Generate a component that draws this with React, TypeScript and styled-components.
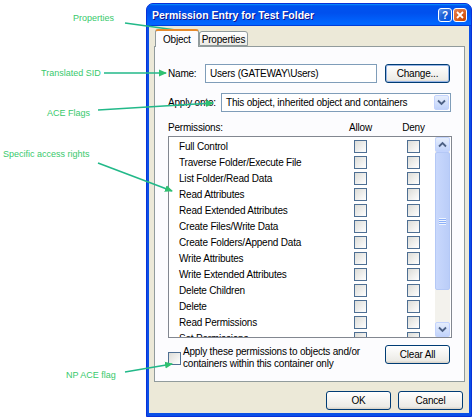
import React from "react"
import styled, { createGlobalStyle } from "styled-components"

const GlobalStyle = createGlobalStyle`
	html, body {
		margin: 0;
		padding: 0;
		background: #ffffff;
	}
	body {
		width: 474px;
		height: 420px;
		overflow: hidden;
		font-family: "Liberation Sans", Arial, sans-serif;
	}
`

const permissions = [
	"Full Control",
	"Traverse Folder/Execute File",
	"List Folder/Read Data",
	"Read Attributes",
	"Read Extended Attributes",
	"Create Files/Write Data",
	"Create Folders/Append Data",
	"Write Attributes",
	"Write Extended Attributes",
	"Delete Children",
	"Delete",
	"Read Permissions",
	"Set Permissions"
]

const notes = [
	{ text: "Properties", x: 73, y: 12 },
	{ text: "Translated SID", x: 41, y: 67 },
	{ text: "ACE Flags", x: 47, y: 107 },
	{ text: "Specific access rights", x: 3, y: 148 },
	{ text: "NP ACE flag", x: 66, y: 369 }
]

const arrows = [
	[125, 23, 212, 35],
	[104, 73, 166, 73],
	[98, 110, 213, 103],
	[98, 163, 172, 191],
	[125, 372, 172, 364]
]

const Chevron = ({ up }: { up?: boolean }) => (
	<svg width="9" height="7" viewBox="0 0 9 7">
		<path d={up ? "M1 5.5 L4.5 2 L8 5.5" : "M1 1.5 L4.5 5 L8 1.5"} fill="none" stroke="#4d6185" strokeWidth="1.8" />
	</svg>
)

const App = () => {
	return (
		<Page>
			<GlobalStyle />
			<Window>
				<TitleBar>
					<Title>Permission Entry for Test Folder</Title>
					<TitleButton>?</TitleButton>
					<TitleButton $close>
						<svg width="8" height="8" viewBox="0 0 8 8">
							<path d="M1 1 L7 7 M7 1 L1 7" stroke="#fff" strokeWidth="1.8" />
						</svg>
					</TitleButton>
				</TitleBar>
				<Body>
					<TabStrip>
						<Tab $active>Object</Tab>
						<Tab>Properties</Tab>
					</TabStrip>
					<Panel>
						<FieldRow>
							<Label $width={37}>Name:</Label>
							<TextField>Users (GATEWAY\Users)</TextField>
							<Spacer $width={8} />
							<Button $default>Change...</Button>
						</FieldRow>
						<FieldRow $gap={10}>
							<Label $width={53}>Apply onto:</Label>
							<Select>
								<span>This object, inherited object and containers</span>
								<SelectArrow>
									<Chevron />
								</SelectArrow>
							</Select>
						</FieldRow>
						<Header>
							<HeaderLabel>Permissions:</HeaderLabel>
							<HeaderCol>Allow</HeaderCol>
							<HeaderCol $gap>Deny</HeaderCol>
						</Header>
						<ListBox>
							<Rows>
								{permissions.map((p) => (
									<PermRow key={p}>
										<PermName>{p}</PermName>
										<Check />
										<Check $gap />
									</PermRow>
								))}
							</Rows>
							<ScrollBar>
								<ScrollButton>
									<Chevron up />
								</ScrollButton>
								<Thumb>
									<Grip />
								</Thumb>
								<Track />
								<ScrollButton>
									<Chevron />
								</ScrollButton>
							</ScrollBar>
						</ListBox>
						<BottomRow>
							<ApplyOption>
								<Check />
								<ApplyText>
									Apply these permissions to objects and/or
									<br />
									containers within this container only
								</ApplyText>
							</ApplyOption>
							<Button>Clear All</Button>
						</BottomRow>
					</Panel>
					<Footer>
						<Button>OK</Button>
						<Button>Cancel</Button>
					</Footer>
				</Body>
			</Window>
			<Overlay width="474" height="420" viewBox="0 0 474 420">
				<defs>
					<marker id="head" markerWidth="8" markerHeight="8" refX="7" refY="4" orient="auto" markerUnits="userSpaceOnUse">
						<path d="M0 0.5 L8 4 L0 7.5 Z" fill="#2fc070" />
					</marker>
				</defs>
				{arrows.map(([x1, y1, x2, y2], i) => (
					<line key={i} x1={x1} y1={y1} x2={x2} y2={y2} stroke="#22b989" strokeWidth="1.6" markerEnd="url(#head)" />
				))}
			</Overlay>
			{notes.map((n) => (
				<Note key={n.text} style={{ left: n.x, top: n.y }}>
					{n.text}
				</Note>
			))}
		</Page>
	)
}

const Page = styled.div`
	position: relative;
	width: 474px;
	height: 420px;
	box-sizing: border-box;
	padding: 3px 0 0 146px;
	font-size: 10px;
	letter-spacing: -0.2px;
	color: #000;
`

const Window = styled.div`
	width: 326px;
	height: 414px;
	box-sizing: border-box;
	display: flex;
	flex-direction: column;
	background: #0a4fe6;
	border: 1px solid #0831d9;
	border-radius: 7px 7px 0 0;
	padding: 0 2px 3px;
`

const TitleBar = styled.div`
	height: 22px;
	margin: 0 -2px;
	border-radius: 6px 6px 0 0;
	display: flex;
	align-items: center;
	gap: 1px;
	padding: 0 4px 0 5px;
	background: linear-gradient(180deg, #0997ff, #0053ee 8%, #0050ee 40%, #06f 88%, #06f 93%, #005bff 95%, #003dd7 96%, #003dd7);
`

const Title = styled.div`
	flex: 1;
	color: #fff;
	font-weight: bold;
	font-size: 10.5px;
	letter-spacing: 0;
	text-shadow: 1px 1px #0f1089;
	white-space: nowrap;
`

const TitleButton = styled.div<{ $close?: boolean }>`
	width: 14px;
	height: 14px;
	box-sizing: border-box;
	border: 1px solid #fff;
	border-radius: 3px;
	display: flex;
	align-items: center;
	justify-content: center;
	color: #fff;
	font-weight: bold;
	font-size: 10px;
	background: ${({ $close }) =>
		$close ? "radial-gradient(circle at 80% 90%, #cc4600, #dc6527 55%, #e3855c)" : "radial-gradient(circle at 80% 90%, #0054e9, #2263d5 55%, #6696eb)"};
`

const Body = styled.div`
	flex: 1;
	display: flex;
	flex-direction: column;
	background: #ece9d8;
	padding: 3px 4px 0 5px;
`

const TabStrip = styled.div`
	height: 17px;
	display: flex;
	align-items: flex-end;
	padding-left: 1px;
	position: relative;
	z-index: 1;
`

const Tab = styled.div<{ $active?: boolean }>`
	box-sizing: border-box;
	height: ${({ $active }) => ($active ? "18px" : "15px")};
	margin-bottom: ${({ $active }) => ($active ? "-1px" : "0")};
	padding: ${({ $active }) => ($active ? "3px 7px 0" : "2px 2px 0")};
	border: 1px solid #919b9c;
	border-bottom: ${({ $active }) => ($active ? "none" : "1px solid #919b9c")};
	border-top: ${({ $active }) => ($active ? "2px solid #e68b2c" : "1px solid #919b9c")};
	border-radius: 3px 3px 0 0;
	background: ${({ $active }) => ($active ? "#fcfcfe" : "linear-gradient(180deg, #fff, #ecebe6)")};
	white-space: nowrap;
	font-size: 10px;
`

const Panel = styled.div`
	height: 336px;
	box-sizing: border-box;
	display: flex;
	flex-direction: column;
	background: #fcfcfe;
	border: 1px solid #919b9c;
	padding: 17px 12px 0 13px;
`

const FieldRow = styled.div<{ $gap?: number }>`
	height: 19px;
	margin-top: ${({ $gap }) => $gap ?? 0}px;
	display: flex;
	align-items: center;
`

const Label = styled.div<{ $width: number }>`
	width: ${({ $width }) => $width}px;
	white-space: nowrap;
`

const Spacer = styled.div<{ $width: number }>`
	width: ${({ $width }) => $width}px;
`

const TextField = styled.div`
	width: 172px;
	height: 19px;
	box-sizing: border-box;
	border: 1px solid #7f9db9;
	background: #fff;
	padding: 0 4px;
	display: flex;
	align-items: center;
	white-space: nowrap;
`

const Select = styled.div`
	width: 230px;
	height: 19px;
	box-sizing: border-box;
	border: 1px solid #7f9db9;
	background: #fff;
	padding: 0 1px 0 4px;
	display: flex;
	align-items: center;
	justify-content: space-between;
	white-space: nowrap;
`

const SelectArrow = styled.div`
	width: 15px;
	height: 15px;
	box-sizing: border-box;
	border: 1px solid #c3d3fd;
	border-radius: 2px;
	background: linear-gradient(180deg, #e6eefc, #c1d3fb);
	display: flex;
	align-items: center;
	justify-content: center;
`

const Button = styled.div<{ $default?: boolean }>`
	width: 65px;
	height: 19px;
	box-sizing: border-box;
	border: 1px solid #003c74;
	border-radius: 3px;
	background: linear-gradient(180deg, #fff, #ecebe6 86%, #d6d0c5);
	box-shadow: ${({ $default }) => ($default ? "inset 0 0 0 1px #97b5e6" : "none")};
	display: flex;
	align-items: center;
	justify-content: center;
	white-space: nowrap;
`

const Header = styled.div`
	margin-top: 9px;
	height: 12px;
	display: flex;
	align-items: center;
`

const HeaderLabel = styled.div`
	width: 186px;
`

const HeaderCol = styled.div<{ $gap?: boolean }>`
	width: 13px;
	margin-left: ${({ $gap }) => ($gap ? "40px" : "0")};
	display: flex;
	justify-content: center;
	white-space: nowrap;
`

const ListBox = styled.div`
	margin-top: 3px;
	width: 284px;
	height: 202px;
	box-sizing: border-box;
	border: 1px solid #828790;
	background: #fff;
	display: flex;
	overflow: hidden;
`

const Rows = styled.div`
	flex: 1;
	padding: 1px 0 0 10px;
	overflow: hidden;
`

const PermRow = styled.div`
	height: 16px;
	display: flex;
	align-items: center;
`

const PermName = styled.div`
	width: 175px;
	white-space: nowrap;
`

const Check = styled.div<{ $gap?: boolean }>`
	flex: none;
	width: 13px;
	height: 13px;
	box-sizing: border-box;
	margin-left: ${({ $gap }) => ($gap ? "40px" : "0")};
	border: 1px solid #4e6f93;
	background: linear-gradient(135deg, #dcdcd7, #fff);
`

const ScrollBar = styled.div`
	width: 15px;
	margin-right: 1px;
	display: flex;
	flex-direction: column;
	background: #f3f2ed;
`

const ScrollButton = styled.div`
	height: 15px;
	box-sizing: border-box;
	border: 1px solid #c3d3fd;
	border-radius: 2px;
	background: linear-gradient(180deg, #e6eefc, #c1d3fb);
	display: flex;
	align-items: center;
	justify-content: center;
`

const Thumb = styled.div`
	height: 138px;
	box-sizing: border-box;
	border: 1px solid #b4c8f6;
	border-radius: 2px;
	background: linear-gradient(90deg, #c9d8fc, #bacdf8);
	display: flex;
	align-items: center;
	justify-content: center;
`

const Grip = styled.div`
	width: 7px;
	height: 7px;
	background: repeating-linear-gradient(180deg, #eef4fe 0 1px, #8cb0f8 1px 2px);
`

const Track = styled.div`
	flex: 1;
`

const BottomRow = styled.div`
	margin-top: 7px;
	height: 26px;
	display: flex;
	align-items: flex-start;
	justify-content: space-between;
	padding-right: 2px;
`

const ApplyOption = styled.div`
	height: 26px;
	display: flex;
	align-items: center;
	gap: 2px;
`

const ApplyText = styled.div`
	line-height: 12px;
	white-space: nowrap;
`

const Footer = styled.div`
	margin-top: 9px;
	display: flex;
	justify-content: flex-end;
	gap: 7px;
	padding-right: 2px;
`

const Overlay = styled.svg`
	position: absolute;
	left: 0;
	top: 0;
	pointer-events: none;
`

const Note = styled.div`
	position: absolute;
	font-size: 9px;
	line-height: 12px;
	letter-spacing: 0;
	color: #38c96c;
	white-space: nowrap;
`

export default App
